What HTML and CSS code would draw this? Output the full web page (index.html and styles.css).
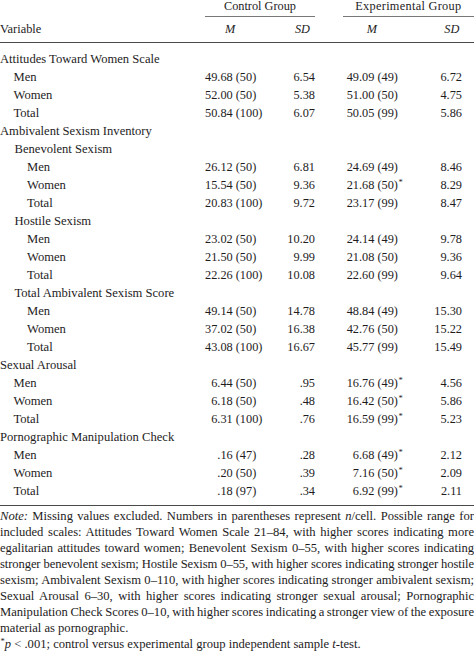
FILE: index.html
```html
<!DOCTYPE html>
<html lang="en">
<head>
<meta charset="utf-8">
<title>Table</title>
<link rel="stylesheet" href="styles.css">
</head>
<body>
<div class="table">
  <div class="head">
    <div class="row row-groups">
      <div class="grp grp-control">Control Group</div>
      <div class="grp grp-exp">Experimental Group</div>
    </div>
    <div class="row row-cols">
      <div class="h-var">Variable</div>
      <div class="h-cm"><i>M</i></div>
      <div class="h-csd"><i>SD</i></div>
      <div class="h-em"><i>M</i></div>
      <div class="h-esd"><i>SD</i></div>
    </div>
  </div>
  <div class="body">
    <div class="row"><div class="lab">Attitudes Toward Women Scale</div></div>
    <div class="row"><div class="lab l1">Men</div><div class="cm"><span class="num">49.68</span> (50)</div><div class="csd">6.54</div><div class="em"><span class="num">49.09</span> (49)</div><div class="esd">6.72</div></div>
    <div class="row"><div class="lab l1">Women</div><div class="cm"><span class="num">52.00</span> (50)</div><div class="csd">5.38</div><div class="em"><span class="num">51.00</span> (50)</div><div class="esd">4.75</div></div>
    <div class="row"><div class="lab l1">Total</div><div class="cm"><span class="num">50.84</span> (100)</div><div class="csd">6.07</div><div class="em"><span class="num">50.05</span> (99)</div><div class="esd">5.86</div></div>
    <div class="row"><div class="lab">Ambivalent Sexism Inventory</div></div>
    <div class="row"><div class="lab sub">Benevolent Sexism</div></div>
    <div class="row"><div class="lab l2">Men</div><div class="cm"><span class="num">26.12</span> (50)</div><div class="csd">6.81</div><div class="em"><span class="num">24.69</span> (49)</div><div class="esd">8.46</div></div>
    <div class="row"><div class="lab l2">Women</div><div class="cm"><span class="num">15.54</span> (50)</div><div class="csd">9.36</div><div class="em"><span class="num">21.68</span> (50)<sup class="star">*</sup></div><div class="esd">8.29</div></div>
    <div class="row"><div class="lab l2">Total</div><div class="cm"><span class="num">20.83</span> (100)</div><div class="csd">9.72</div><div class="em"><span class="num">23.17</span> (99)</div><div class="esd">8.47</div></div>
    <div class="row"><div class="lab sub">Hostile Sexism</div></div>
    <div class="row"><div class="lab l2">Men</div><div class="cm"><span class="num">23.02</span> (50)</div><div class="csd">10.20</div><div class="em"><span class="num">24.14</span> (49)</div><div class="esd">9.78</div></div>
    <div class="row"><div class="lab l2">Women</div><div class="cm"><span class="num">21.50</span> (50)</div><div class="csd">9.99</div><div class="em"><span class="num">21.08</span> (50)</div><div class="esd">9.36</div></div>
    <div class="row"><div class="lab l2">Total</div><div class="cm"><span class="num">22.26</span> (100)</div><div class="csd">10.08</div><div class="em"><span class="num">22.60</span> (99)</div><div class="esd">9.64</div></div>
    <div class="row"><div class="lab sub">Total Ambivalent Sexism Score</div></div>
    <div class="row"><div class="lab l2">Men</div><div class="cm"><span class="num">49.14</span> (50)</div><div class="csd">14.78</div><div class="em"><span class="num">48.84</span> (49)</div><div class="esd">15.30</div></div>
    <div class="row"><div class="lab l2">Women</div><div class="cm"><span class="num">37.02</span> (50)</div><div class="csd">16.38</div><div class="em"><span class="num">42.76</span> (50)</div><div class="esd">15.22</div></div>
    <div class="row"><div class="lab l2">Total</div><div class="cm"><span class="num">43.08</span> (100)</div><div class="csd">16.67</div><div class="em"><span class="num">45.77</span> (99)</div><div class="esd">15.49</div></div>
    <div class="row"><div class="lab">Sexual Arousal</div></div>
    <div class="row"><div class="lab l1">Men</div><div class="cm"><span class="num">6.44</span> (50)</div><div class="csd">.95</div><div class="em"><span class="num">16.76</span> (49)<sup class="star">*</sup></div><div class="esd">4.56</div></div>
    <div class="row"><div class="lab l1">Women</div><div class="cm"><span class="num">6.18</span> (50)</div><div class="csd">.48</div><div class="em"><span class="num">16.42</span> (50)<sup class="star">*</sup></div><div class="esd">5.86</div></div>
    <div class="row"><div class="lab l1">Total</div><div class="cm"><span class="num">6.31</span> (100)</div><div class="csd">.76</div><div class="em"><span class="num">16.59</span> (99)<sup class="star">*</sup></div><div class="esd">5.23</div></div>
    <div class="row"><div class="lab">Pornographic Manipulation Check</div></div>
    <div class="row"><div class="lab l1">Men</div><div class="cm"><span class="num">.16</span> (47)</div><div class="csd">.28</div><div class="em"><span class="num">6.68</span> (49)<sup class="star">*</sup></div><div class="esd">2.12</div></div>
    <div class="row"><div class="lab l1">Women</div><div class="cm"><span class="num">.20</span> (50)</div><div class="csd">.39</div><div class="em"><span class="num">7.16</span> (50)<sup class="star">*</sup></div><div class="esd">2.09</div></div>
    <div class="row"><div class="lab l1">Total</div><div class="cm"><span class="num">.18</span> (97)</div><div class="csd">.34</div><div class="em"><span class="num">6.92</span> (99)<sup class="star">*</sup></div><div class="esd">2.11</div></div>
  </div>
  <div class="note">
    <span class="line"><i>Note:</i> Missing values excluded. Numbers in parentheses represent <i>n</i>/cell. Possible range for</span>
    <span class="line">included scales: Attitudes Toward Women Scale 21–84, with higher scores indicating more</span>
    <span class="line">egalitarian attitudes toward women; Benevolent Sexism 0–55, with higher scores indicating</span>
    <span class="line tighter">stronger benevolent sexism; Hostile Sexism 0–55, with higher scores indicating stronger hostile</span>
    <span class="line">sexism; Ambivalent Sexism 0–110, with higher scores indicating stronger ambivalent sexism;</span>
    <span class="line">Sexual Arousal 6–30, with higher scores indicating stronger sexual arousal; Pornographic</span>
    <span class="line tight">Manipulation Check Scores 0–10, with higher scores indicating a stronger view of the exposure</span>
    <span class="line last">material as pornographic.</span>
    <span class="line last"><sup class="star">*</sup><i>p</i> &lt; .001; control versus experimental group independent sample <i>t</i>-test.</span>
  </div>
</div>
</body>
</html>
```
FILE: styles.css
```css
html, body {
  margin: 0;
  padding: 0;
  background: #ffffff;
}
body {
  font-family: "Liberation Serif", "Times New Roman", serif;
  font-size: 12.3px;
  color: #1e1c1d;
}
.table {
  width: 474px;
}
.row {
  display: grid;
  grid-template-columns: 205px 62px 48px 84px 75px;
  line-height: 18px;
  white-space: nowrap;
}
.row-groups {
  line-height: 13.6px;
}
.grp {
  text-align: center;
  padding-bottom: 2.4px;
  border-bottom: 1px solid #777777;
}
.grp-control {
  grid-column: 2 / 4;
}
.grp-exp {
  grid-column: 4 / 6;
  margin-left: 27.7px;
  letter-spacing: 0.3px;
}
.row-cols {
  padding-top: 3px;
  padding-bottom: 4.5px;
  border-bottom: 1px solid #4a4a4a;
}
.h-var {
  font-size: 12.4px;
}
.h-cm {
  padding-left: 20px;
}
.h-csd {
  text-align: right;
  padding-right: 5px;
}
.h-em {
  padding-left: 51.7px;
}
.h-esd {
  text-align: right;
  padding-right: 14.7px;
}
.body {
  padding-top: 6.3px;
  padding-bottom: 5.7px;
  border-bottom: 1px solid #4a4a4a;
}
.lab {
  grid-column: 1;
  font-size: 12.6px;
}
.l1 {
  padding-left: 13.5px;
}
.sub {
  padding-left: 14.5px;
}
.l2 {
  padding-left: 27px;
}
.num {
  display: inline-block;
  width: 27.7px;
  text-align: right;
}
.csd {
  text-align: right;
}
.em {
  padding-left: 31.7px;
}
.esd {
  text-align: right;
  padding-right: 12px;
}
.star {
  font-size: 8.5px;
  line-height: 0;
  vertical-align: 4px;
  margin-left: 0.5px;
}
.note {
  padding-top: 1.2px;
  line-height: 16px;
  font-size: 12.6px;
}
.line {
  display: block;
  white-space: nowrap;
  text-align: justify;
  text-align-last: justify;
}
.line.tight {
  word-spacing: -0.6px;
}
.line.tighter {
  word-spacing: -0.9px;
  letter-spacing: -0.1px;
}
.line.last {
  text-align: left;
  text-align-last: left;
}
```
